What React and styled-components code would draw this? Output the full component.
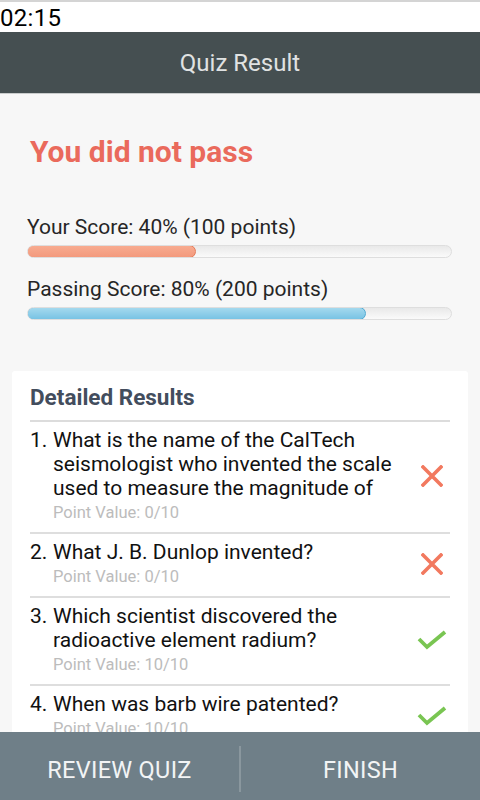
import styled, { createGlobalStyle } from "styled-components";

const GlobalStyle = createGlobalStyle`
  html, body {
    margin: 0;
    padding: 0;
    background: #f7f7f7;
  }
  body {
    font-family: Roboto, "Noto Sans", sans-serif;
  }
`;

const Screen = styled.div`
  width: 480px;
  height: 800px;
  display: flex;
  flex-direction: column;
  overflow: hidden;
  background: #f7f7f7;
`;

const StatusBar = styled.div`
  height: 32px;
  flex-shrink: 0;
  background: #fff;
  border-top: 2px solid #d4d4d4;
  display: flex;
  align-items: center;
  font-family: Roboto, sans-serif;
  font-size: 24px;
  color: #000;
  line-height: 1;
  letter-spacing: 0.3px;
  padding-top: 1px;
  box-sizing: border-box;
`;

const Header = styled.div`
  height: 61px;
  flex-shrink: 0;
  background: #454f51;
  display: flex;
  align-items: center;
  justify-content: center;
  color: #e0e2e2;
  font-size: 24px;
  border-bottom: 1px solid #c9cccc;
`;

const Body = styled.div`
  flex: 1;
  overflow: hidden;
  padding: 0 12px;
`;

const Verdict = styled.h1`
  margin: 42px 0 0 18px;
  font-size: 30px;
  font-weight: 700;
  color: #ea6a5c;
  line-height: 32px;
`;

const ScoreBlock = styled.div`
  margin: 47px 16px 0 15px;
  display: flex;
  flex-direction: column;
`;

const ScoreLabel = styled.div`
  font-size: 21px;
  color: #262626;
  line-height: 24px;
  margin-bottom: 6px;
`;

const Track = styled.div`
  height: 13px;
  border-radius: 7px;
  background: linear-gradient(#e9e9e9, #fafafa);
  border: 1px solid #dedede;
  box-sizing: border-box;
  margin-bottom: 19px;
  overflow: hidden;
  display: flex;
  &:last-child {
    margin-bottom: 0;
  }
`;

const Fill = styled.div`
  border-radius: 7px;
  box-sizing: border-box;
  border: 1px solid ${(p) => p.$edge};
  background: linear-gradient(${(p) => p.$top}, ${(p) => p.$bottom});
  margin: -1px 0 0 -1px;
  height: 13px;
`;

const Card = styled.div`
  margin-top: 51px;
  background: #fff;
  border-radius: 3px;
  padding: 13px 18px 0;
`;

const CardTitle = styled.h2`
  margin: 0;
  font-size: 22.5px;
  font-weight: 700;
  color: #434d5d;
  line-height: 26px;
  padding-bottom: 10px;
  border-bottom: 2px solid #dcdcdc;
`;

const Item = styled.div`
  display: flex;
  align-items: center;
  padding: 6px 0 9px;
  border-bottom: 2px solid #dedede;
`;

const Number = styled.div`
  width: 23px;
  flex-shrink: 0;
  font-size: 21px;
  line-height: 24px;
  color: #111;
  align-self: flex-start;
`;

const ItemText = styled.div`
  flex: 1;
  min-width: 0;
`;

const Question = styled.div`
  font-size: 21px;
  line-height: 24px;
  color: #111;
`;

const Points = styled.div`
  font-size: 16.5px;
  line-height: 20px;
  color: #bcbcbc;
  margin-top: 3px;
`;

const Mark = styled.div`
  width: 36px;
  flex-shrink: 0;
  display: flex;
  justify-content: center;
`;

const Footer = styled.div`
  height: 68px;
  flex-shrink: 0;
  background: #6f7f88;
  display: flex;
  align-items: center;
`;

const FooterButton = styled.button`
  flex: 1;
  height: 100%;
  background: none;
  border: none;
  color: #f2f4f5;
  font-family: Roboto, sans-serif;
  font-size: 23.5px;
  letter-spacing: 0.3px;
  padding: 8px 0 0;
`;

const FooterDivider = styled.div`
  width: 2px;
  height: 46px;
  margin-top: 6px;
  background: #8a979e;
`;

const Cross = () => (
  <svg width="22" height="22" viewBox="0 0 22 22">
    <path d="M2 2L20 20M20 2L2 20" stroke="#f2795f" strokeWidth="3.6" strokeLinecap="square" fill="none" />
  </svg>
);

const Check = () => (
  <svg width="30" height="20" viewBox="0 0 30 20">
    <path d="M2 9L10 17L28 2" stroke="#79c552" strokeWidth="3.8" fill="none" />
  </svg>
);

const results = [
  {
    q: "What is the name of the CalTech seismologist who invented the scale used to measure the magnitude of",
    pts: "0/10",
    ok: false,
  },
  { q: "What J. B. Dunlop invented?", pts: "0/10", ok: false },
  { q: "Which scientist discovered the radioactive element radium?", pts: "10/10", ok: true },
  { q: "When was barb wire patented?", pts: "10/10", ok: true },
];

export default function App() {
  return (
    <>
      <GlobalStyle />
      <Screen>
        <StatusBar>02:15</StatusBar>
        <Header>Quiz Result</Header>
        <Body>
          <Verdict>You did not pass</Verdict>
          <ScoreBlock>
            <ScoreLabel>Your Score: 40% (100 points)</ScoreLabel>
            <Track>
              <Fill style={{ width: "40%" }} $edge="#e37a58" $top="#f8ab90" $bottom="#f39a7d" />
            </Track>
            <ScoreLabel>Passing Score: 80% (200 points)</ScoreLabel>
            <Track>
              <Fill style={{ width: "80.2%" }} $edge="#4fa8d1" $top="#a4d9ee" $bottom="#78c3e4" />
            </Track>
          </ScoreBlock>
          <Card>
            <CardTitle>Detailed Results</CardTitle>
            {results.map((r, i) => (
              <Item key={i}>
                <Number>{i + 1}.</Number>
                <ItemText>
                  <Question>{r.q}</Question>
                  <Points>Point Value: {r.pts}</Points>
                </ItemText>
                <Mark>{r.ok ? <Check /> : <Cross />}</Mark>
              </Item>
            ))}
          </Card>
        </Body>
        <Footer>
          <FooterButton>REVIEW QUIZ</FooterButton>
          <FooterDivider />
          <FooterButton>FINISH</FooterButton>
        </Footer>
      </Screen>
    </>
  );
}
